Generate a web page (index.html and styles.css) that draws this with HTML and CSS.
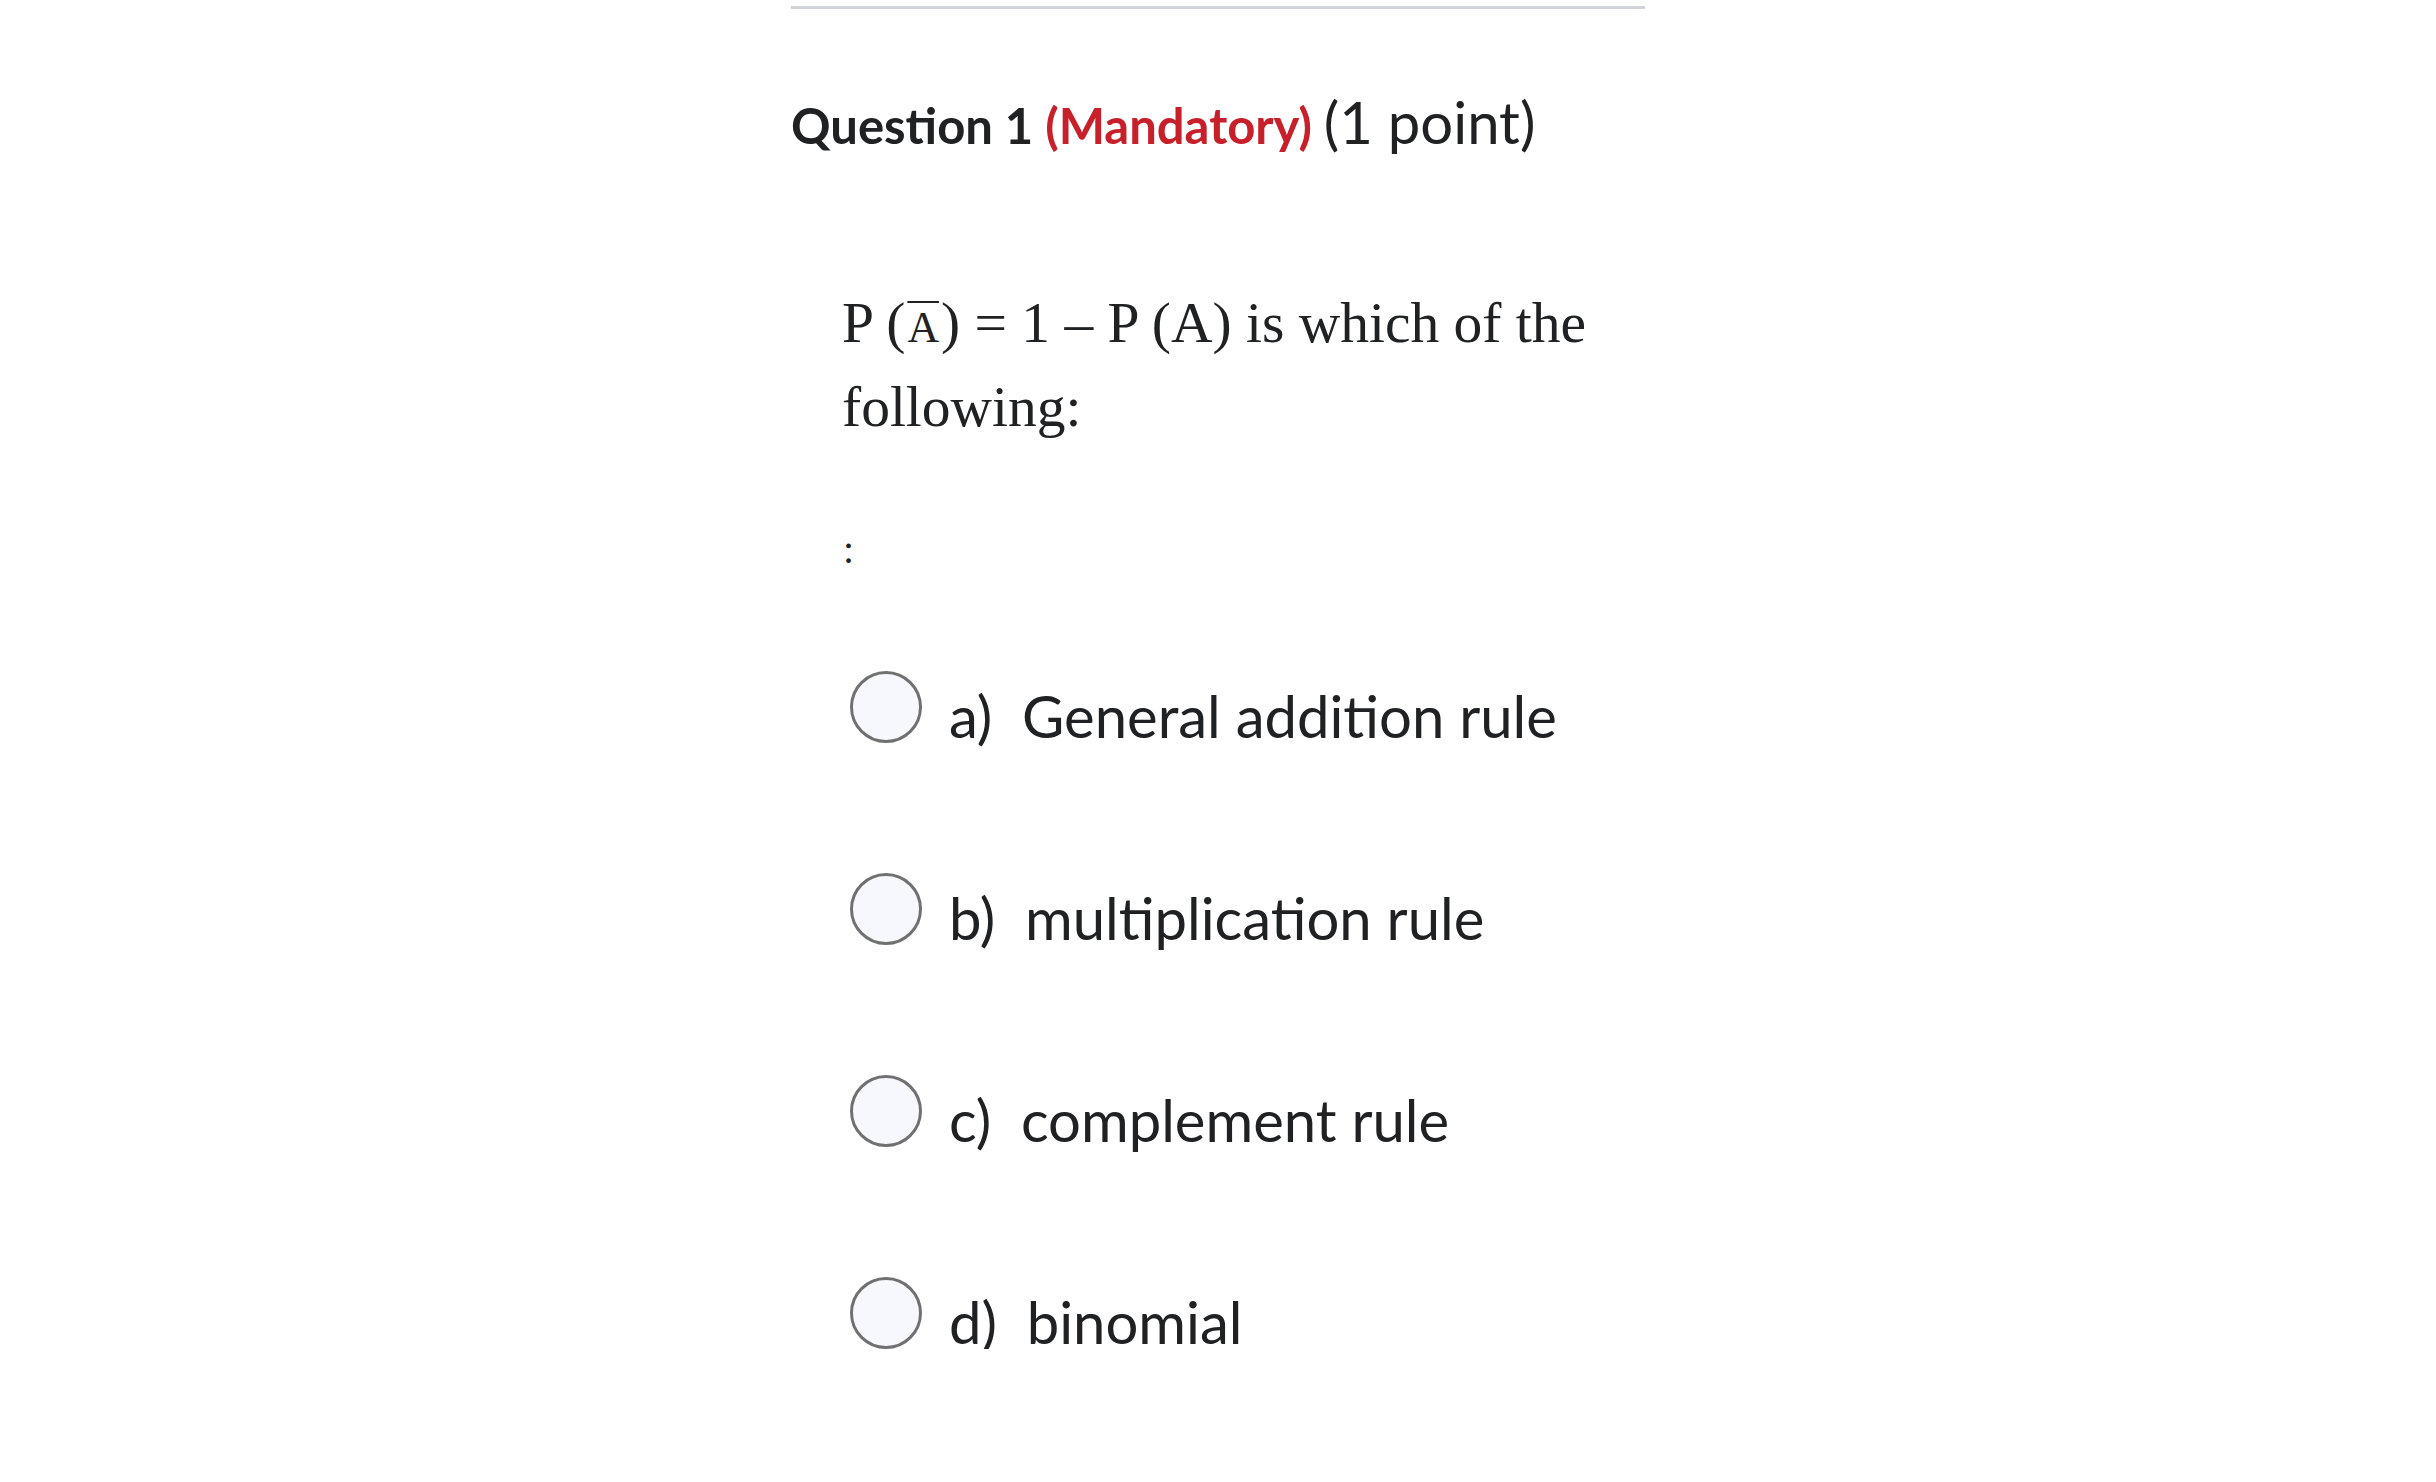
FILE: index.html
```html
<!DOCTYPE html>
<html lang="en">
<head>
<meta charset="utf-8">
<title>Question 1</title>
<link rel="stylesheet" href="styles.css">
</head>
<body>
<main class="page">
  <div class="rule"></div>
  <h2 class="title"><span class="q">Question 1</span> <span class="mandatory">(Mandatory)</span> <span class="points">(1 point)</span></h2>
  <div class="stem">
    <p class="stem-text">P (<span class="abar">A</span>) = 1 – P (A) is which of the following:</p>
    <p class="colon">:</p>
  </div>
  <ul class="options">
    <li class="option"><span class="radio"></span><span class="label">a)&nbsp; General addition rule</span></li>
    <li class="option"><span class="radio"></span><span class="label">b)&nbsp; multiplication rule</span></li>
    <li class="option"><span class="radio"></span><span class="label">c)&nbsp; complement rule</span></li>
    <li class="option"><span class="radio"></span><span class="label">d)&nbsp; binomial</span></li>
  </ul>
</main>
</body>
</html>
```
FILE: styles.css
```css
html, body {
  margin: 0;
  padding: 0;
  background: #ffffff;
}
body {
  font-family: Lato, "Noto Sans", sans-serif;
  color: #202122;
}
.page {
  width: 854px;
  margin: 0 auto;
  padding-top: 6px;
}
.rule {
  height: 3px;
  background: #d0d3d8;
}
.title {
  margin: 81px 0 0 0;
  font-size: 49px;
  line-height: 64px;
  font-weight: 700;
  color: #202122;
}
.mandatory {
  color: #c8202a;
}
.points {
  font-weight: 400;
  font-size: 58px;
}
.stem {
  padding-left: 51px;
  margin-top: 124px;
  font-family: "Liberation Serif", "Times New Roman", serif;
  color: #202122;
}
.stem-text {
  margin: 0;
  font-size: 57.5px;
  line-height: 84px;
  width: 790px;
}
.abar {
  font-size: 0.76em;
  line-height: 1;
  text-decoration: overline;
  text-decoration-thickness: 2px;
  margin: 0 2px;
}
.colon {
  margin: 81px 0 0 1px;
  font-size: 40px;
  line-height: 40px;
}
.options {
  list-style: none;
  margin: 101px 0 0 0;
  padding: 0 0 0 59px;
  display: flex;
  flex-direction: column;
  gap: 130px;
}
.option {
  display: flex;
  align-items: center;
  gap: 27px;
  height: 72px;
}
.radio {
  width: 66px;
  height: 66px;
  border: 3px solid #707070;
  border-radius: 50%;
  background: #f6f8fd;
  flex: none;
}
.label {
  font-size: 58px;
  line-height: 72px;
  padding-top: 18px;
  color: #202122;
}
```
